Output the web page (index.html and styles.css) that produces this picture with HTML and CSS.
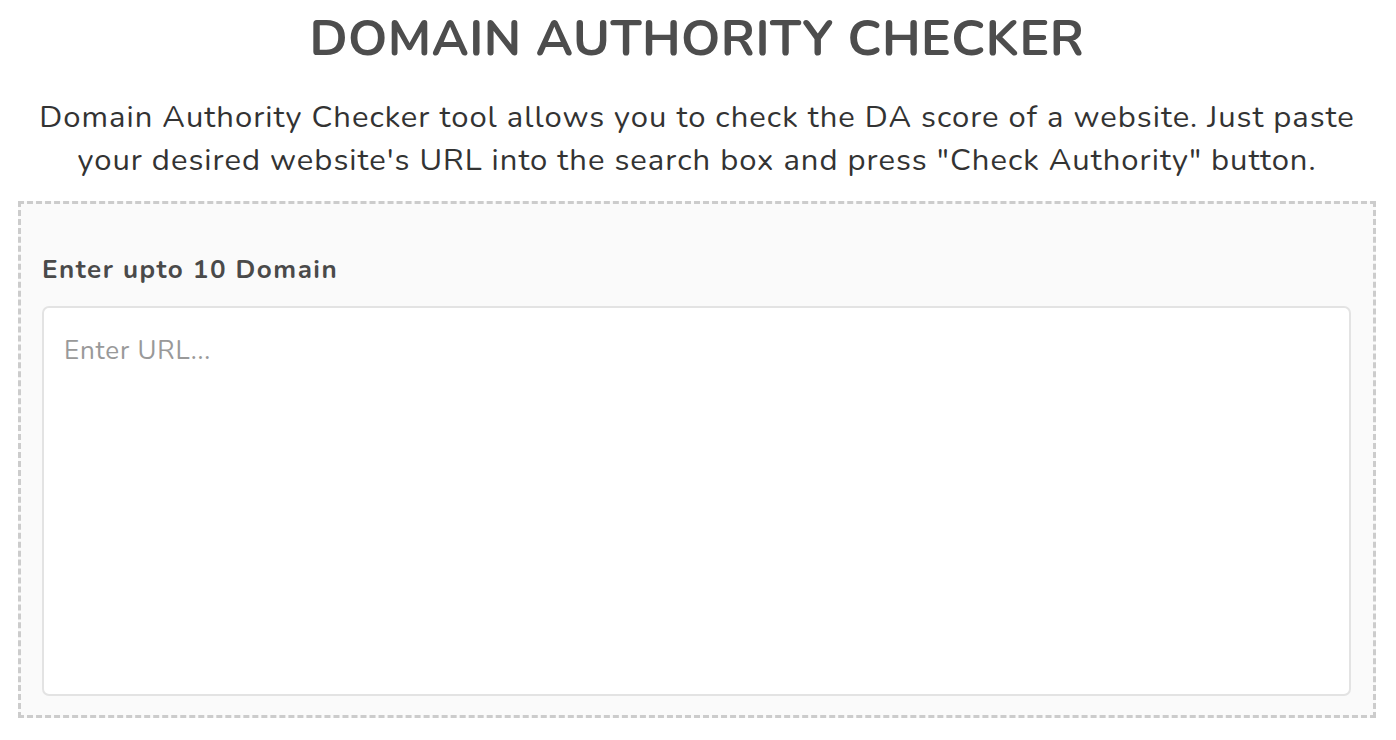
FILE: index.html
```html
<!DOCTYPE html>
<html lang="en">
<head>
  <meta charset="UTF-8" />
  <meta name="viewport" content="width=device-width, initial-scale=1.0" />
  <title>Domain Authority Checker</title>
  <link rel="stylesheet" href="styles.css">
</head>
<body>
  <main class="checker">
    <h1>DOMAIN AUTHORITY CHECKER</h1>
    <p class="intro">Domain Authority Checker tool allows you to check the DA score of a website. Just paste your desired website's URL into the search box and press "Check Authority" button.</p>

    <form class="checker-box">
      <label for="domains">Enter upto 10 Domain</label>
      <textarea id="domains" placeholder="Enter URL..."></textarea>
    </form>
  </main>
</body>
</html>
```

FILE: styles.css
```css
body {
  font-family: Nunito, Lato, "Open Sans", sans-serif;
  background-color: #fff;
  color: #333;
  margin: 0;
}
.checker {
  padding: 0 20px 0 18px;
}
h1 {
  font-size: 50px;
  font-weight: 700;
  letter-spacing: 0.45px;
  color: #4d4d4d;
  text-align: center;
  margin: 7px 0 0;
  line-height: 64px;
}
.intro {
  font-size: 31px;
  letter-spacing: 1px;
  line-height: 43px;
  text-align: center;
  margin: 25px 0 19px;
}
.checker-box {
  background-color: #fafafa;
  border: 3px dashed #ccc;
  padding: 48px 22px 19px 21px;
}
.checker-box label {
  display: block;
  font-size: 26px;
  font-weight: 700;
  letter-spacing: 1.5px;
  color: #4a4a4a;
  margin-bottom: 19px;
}
.checker-box textarea {
  display: block;
  box-sizing: border-box;
  width: 100%;
  height: 390px;
  padding: 25px 20px;
  border: 2px solid #e3e3e3;
  border-radius: 7px;
  background-color: #fff;
  font-family: inherit;
  font-size: 26px;
  letter-spacing: 0.8px;
  color: #333;
  resize: none;
}
.checker-box textarea::placeholder {
  color: #999;
}
```
